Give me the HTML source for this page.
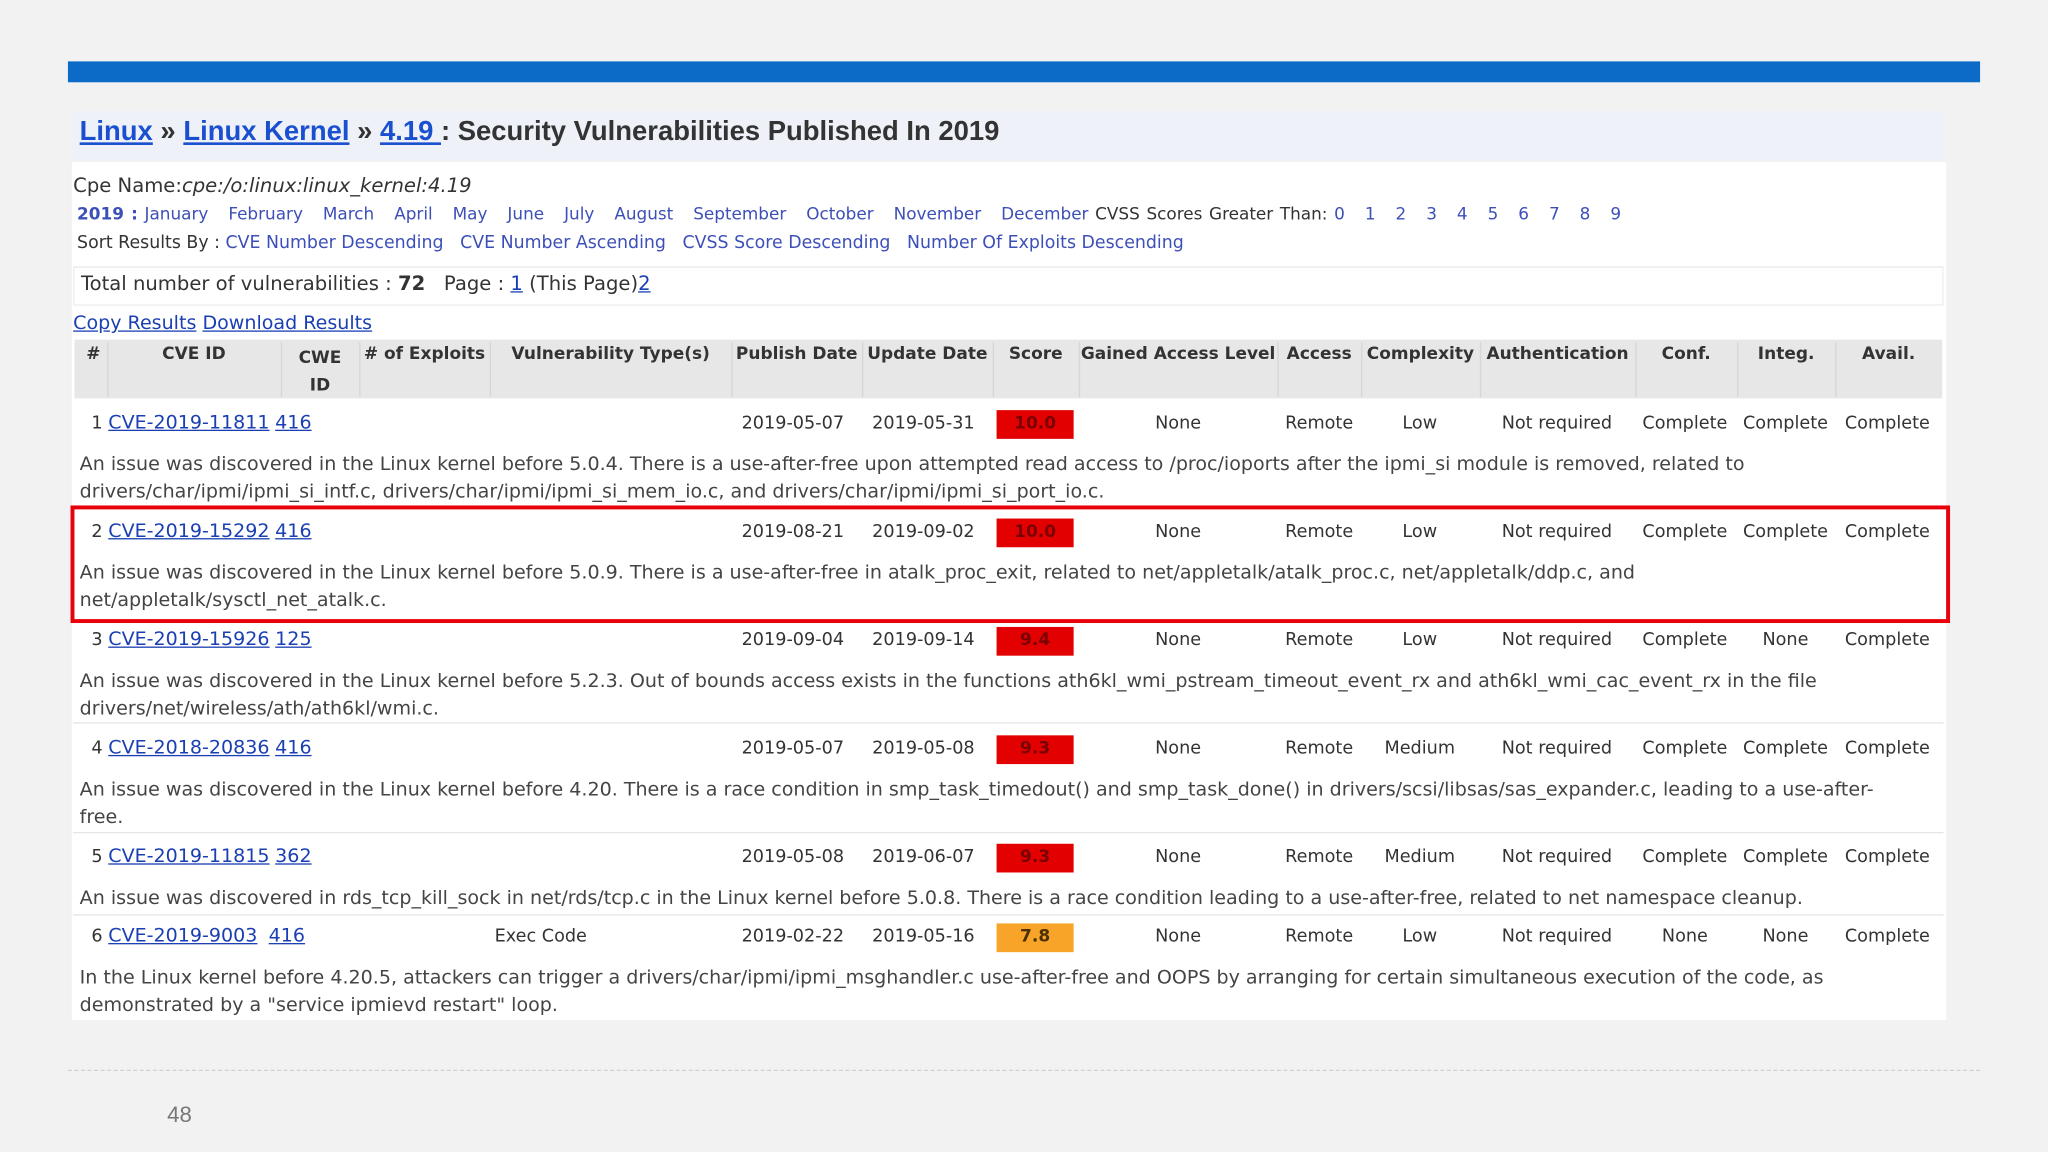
<!DOCTYPE html>
<html><head><meta charset="utf-8"><style>
html,body{margin:0;padding:0;width:2048px;height:1152px;overflow:hidden;background:#f2f2f2;}
#s{position:absolute;left:0;top:0;width:1568px;height:882px;transform:scale(1.306122);transform-origin:0 0;font-family:"DejaVu Sans","Liberation Sans",sans-serif;color:#333;}
.a{position:absolute;white-space:nowrap;line-height:16px;}
.c{text-align:center;}
a,.l{color:#1a3fb3;text-decoration:underline;}
.m{color:#3d4fb8;}
.t{font-size:13.5px;}
.d{font-size:14.6px;color:#444;}
.h{font-size:13px;font-weight:bold;color:#333;}
.cv{font-size:14.6px;}
.sc{position:absolute;left:763px;width:59px;height:22px;background:#e30000;color:#7a0000;font-weight:bold;font-size:13px;text-align:center;line-height:22px;}
.vl{position:absolute;top:262px;width:1px;height:42px;background:#d6d6d6;}
.hl{position:absolute;left:56px;width:1432px;height:1px;background:#e6e6e6;}
</style></head><body><div id="s">
<div style="position:absolute;left:52px;top:47px;width:1464px;height:16px;background:#0b6bc6"></div>
<div style="position:absolute;left:55px;top:85px;width:1435px;height:38px;background:#eef1f7"></div>
<div style="position:absolute;left:55px;top:124px;width:1435px;height:657px;background:#fff"></div>
<div class="a" style="left:61px;top:89px;line-height:24px;font-size:21px;font-weight:bold;color:#333;font-family:'Liberation Sans',sans-serif"><span class="l" style="color:#1a4fd0">Linux</span> » <span class="l" style="color:#1a4fd0">Linux Kernel</span> » <span class="l" style="color:#1a4fd0">4.19 </span>: Security Vulnerabilities Published In 2019</div>
<div class="a t" style="left:56px;top:134px;font-size:15px">Cpe Name:<i>cpe:/o:linux:linux_kernel:4.19</i></div>
<div class="a" style="left:59px;top:157px;font-size:12.9px;word-spacing:1px"><b class="m">2019 :</b> <span class="m">January &nbsp; February &nbsp; March &nbsp; April &nbsp; May &nbsp; June &nbsp; July &nbsp; August &nbsp; September &nbsp; October &nbsp; November &nbsp; December</span> CVSS Scores Greater Than: <span class="m">0 &nbsp; 1 &nbsp; 2 &nbsp; 3 &nbsp; 4 &nbsp; 5 &nbsp; 6 &nbsp; 7 &nbsp; 8 &nbsp; 9</span></div>
<div class="a" style="left:59px;top:179px;font-size:13.3px">Sort Results By : <span class="m">CVE Number Descending &nbsp; CVE Number Ascending &nbsp; CVSS Score Descending &nbsp; Number Of Exploits Descending</span></div>
<div style="position:absolute;left:56px;top:204px;width:1430px;height:28px;border:1px solid #eee;border-top:1px solid #e8e8e8"></div>
<div class="a t" style="left:62px;top:209px;font-size:15px">Total number of vulnerabilities : <b>72</b> &nbsp; Page : <span class="l">1</span> (This Page)<span class="l">2</span></div>
<div class="a t" style="left:56px;top:240px;font-size:14.6px"><span class="l">Copy Results</span> <span class="l">Download Results</span></div>
<div style="position:absolute;left:57px;top:260px;width:1430px;height:45px;background:#e7e7e7"></div>
<div class="vl" style="left:82px"></div><div class="vl" style="left:215px"></div><div class="vl" style="left:275px"></div><div class="vl" style="left:375px"></div><div class="vl" style="left:560px"></div><div class="vl" style="left:660px"></div><div class="vl" style="left:760px"></div><div class="vl" style="left:826px"></div><div class="vl" style="left:978px"></div><div class="vl" style="left:1042px"></div><div class="vl" style="left:1133px"></div><div class="vl" style="left:1252px"></div><div class="vl" style="left:1330px"></div><div class="vl" style="left:1405px"></div>
<div class="a h" style="left:66px;top:264px">#</div>
<div class="a h c" style="left:82px;width:133px;top:264px">CVE ID</div>
<div class="a h c" style="left:215px;width:60px;top:264px;line-height:21px;white-space:normal">CWE<br>ID</div>
<div class="a h c" style="left:275px;width:100px;top:264px">#&nbsp;of Exploits</div>
<div class="a h c" style="left:375px;width:185px;top:264px">Vulnerability Type(s)</div>
<div class="a h c" style="left:560px;width:100px;top:264px">Publish Date</div>
<div class="a h c" style="left:660px;width:100px;top:264px">Update Date</div>
<div class="a h c" style="left:760px;width:66px;top:264px">Score</div>
<div class="a h c" style="left:826px;width:152px;top:264px">Gained Access Level</div>
<div class="a h c" style="left:978px;width:64px;top:264px">Access</div>
<div class="a h c" style="left:1042px;width:91px;top:264px">Complexity</div>
<div class="a h c" style="left:1133px;width:119px;top:264px">Authentication</div>
<div class="a h c" style="left:1252px;width:78px;top:264px">Conf.</div>
<div class="a h c" style="left:1330px;width:75px;top:264px">Integ.</div>
<div class="a h c" style="left:1405px;width:82px;top:264px">Avail.</div>

<div class="hl" style="top:553px"></div><div class="hl" style="top:637px"></div><div class="hl" style="top:700px"></div>

<!-- row 1 -->
<div class="a t" style="left:70px;top:316px">1 <span class="l cv">CVE-2019-11811</span> <span class="l cv">416</span></div>
<div class="a t c" style="left:557px;width:100px;top:316px">2019-05-07</div>
<div class="a t c" style="left:657px;width:100px;top:316px">2019-05-31</div>
<div class="sc" style="top:314px">10.0</div>
<div class="a t c" style="left:852px;width:100px;top:316px">None</div>
<div class="a t c" style="left:960px;width:100px;top:316px">Remote</div>
<div class="a t c" style="left:1037px;width:100px;top:316px">Low</div>
<div class="a t c" style="left:1142px;width:100px;top:316px">Not required</div>
<div class="a t c" style="left:1240px;width:100px;top:316px">Complete</div>
<div class="a t c" style="left:1317px;width:100px;top:316px">Complete</div>
<div class="a t c" style="left:1395px;width:100px;top:316px">Complete</div>
<div class="a d" style="left:61px;top:345px;line-height:21px">An issue was discovered in the Linux kernel before 5.0.4. There is a use-after-free upon attempted read access to /proc/ioports after the ipmi_si module is removed, related to<br>drivers/char/ipmi/ipmi_si_intf.c, drivers/char/ipmi/ipmi_si_mem_io.c, and drivers/char/ipmi/ipmi_si_port_io.c.</div>

<!-- row 2 -->
<div class="a t" style="left:70px;top:399px">2 <span class="l cv">CVE-2019-15292</span> <span class="l cv">416</span></div>
<div class="a t c" style="left:557px;width:100px;top:399px">2019-08-21</div>
<div class="a t c" style="left:657px;width:100px;top:399px">2019-09-02</div>
<div class="sc" style="top:397px">10.0</div>
<div class="a t c" style="left:852px;width:100px;top:399px">None</div>
<div class="a t c" style="left:960px;width:100px;top:399px">Remote</div>
<div class="a t c" style="left:1037px;width:100px;top:399px">Low</div>
<div class="a t c" style="left:1142px;width:100px;top:399px">Not required</div>
<div class="a t c" style="left:1240px;width:100px;top:399px">Complete</div>
<div class="a t c" style="left:1317px;width:100px;top:399px">Complete</div>
<div class="a t c" style="left:1395px;width:100px;top:399px">Complete</div>
<div class="a d" style="left:61px;top:428px;line-height:21px">An issue was discovered in the Linux kernel before 5.0.9. There is a use-after-free in atalk_proc_exit, related to net/appletalk/atalk_proc.c, net/appletalk/ddp.c, and<br>net/appletalk/sysctl_net_atalk.c.</div>
<div style="position:absolute;left:54px;top:387px;width:1433px;height:84px;border:3px solid #e8000a"></div>

<!-- row 3 -->
<div class="a t" style="left:70px;top:482px">3 <span class="l cv">CVE-2019-15926</span> <span class="l cv">125</span></div>
<div class="a t c" style="left:557px;width:100px;top:482px">2019-09-04</div>
<div class="a t c" style="left:657px;width:100px;top:482px">2019-09-14</div>
<div class="sc" style="top:480px">9.4</div>
<div class="a t c" style="left:852px;width:100px;top:482px">None</div>
<div class="a t c" style="left:960px;width:100px;top:482px">Remote</div>
<div class="a t c" style="left:1037px;width:100px;top:482px">Low</div>
<div class="a t c" style="left:1142px;width:100px;top:482px">Not required</div>
<div class="a t c" style="left:1240px;width:100px;top:482px">Complete</div>
<div class="a t c" style="left:1317px;width:100px;top:482px">None</div>
<div class="a t c" style="left:1395px;width:100px;top:482px">Complete</div>
<div class="a d" style="left:61px;top:511px;line-height:21px">An issue was discovered in the Linux kernel before 5.2.3. Out of bounds access exists in the functions ath6kl_wmi_pstream_timeout_event_rx and ath6kl_wmi_cac_event_rx in the file<br>drivers/net/wireless/ath/ath6kl/wmi.c.</div>

<!-- row 4 -->
<div class="a t" style="left:70px;top:565px">4 <span class="l cv">CVE-2018-20836</span> <span class="l cv">416</span></div>
<div class="a t c" style="left:557px;width:100px;top:565px">2019-05-07</div>
<div class="a t c" style="left:657px;width:100px;top:565px">2019-05-08</div>
<div class="sc" style="top:563px">9.3</div>
<div class="a t c" style="left:852px;width:100px;top:565px">None</div>
<div class="a t c" style="left:960px;width:100px;top:565px">Remote</div>
<div class="a t c" style="left:1037px;width:100px;top:565px">Medium</div>
<div class="a t c" style="left:1142px;width:100px;top:565px">Not required</div>
<div class="a t c" style="left:1240px;width:100px;top:565px">Complete</div>
<div class="a t c" style="left:1317px;width:100px;top:565px">Complete</div>
<div class="a t c" style="left:1395px;width:100px;top:565px">Complete</div>
<div class="a d" style="left:61px;top:594px;line-height:21px">An issue was discovered in the Linux kernel before 4.20. There is a race condition in smp_task_timedout() and smp_task_done() in drivers/scsi/libsas/sas_expander.c, leading to a use-after-<br>free.</div>

<!-- row 5 -->
<div class="a t" style="left:70px;top:648px">5 <span class="l cv">CVE-2019-11815</span> <span class="l cv">362</span></div>
<div class="a t c" style="left:557px;width:100px;top:648px">2019-05-08</div>
<div class="a t c" style="left:657px;width:100px;top:648px">2019-06-07</div>
<div class="sc" style="top:646px">9.3</div>
<div class="a t c" style="left:852px;width:100px;top:648px">None</div>
<div class="a t c" style="left:960px;width:100px;top:648px">Remote</div>
<div class="a t c" style="left:1037px;width:100px;top:648px">Medium</div>
<div class="a t c" style="left:1142px;width:100px;top:648px">Not required</div>
<div class="a t c" style="left:1240px;width:100px;top:648px">Complete</div>
<div class="a t c" style="left:1317px;width:100px;top:648px">Complete</div>
<div class="a t c" style="left:1395px;width:100px;top:648px">Complete</div>
<div class="a d" style="left:61px;top:677px;line-height:21px">An issue was discovered in rds_tcp_kill_sock in net/rds/tcp.c in the Linux kernel before 5.0.8. There is a race condition leading to a use-after-free, related to net namespace cleanup.</div>

<!-- row 6 -->
<div class="a t" style="left:70px;top:709px">6 <span class="l cv">CVE-2019-9003</span> &nbsp;<span class="l cv">416</span></div>
<div class="a t c" style="left:364px;width:100px;top:709px">Exec Code</div>
<div class="a t c" style="left:557px;width:100px;top:709px">2019-02-22</div>
<div class="a t c" style="left:657px;width:100px;top:709px">2019-05-16</div>
<div class="sc" style="top:707px;background:#f7a428;color:#4a3000">7.8</div>
<div class="a t c" style="left:852px;width:100px;top:709px">None</div>
<div class="a t c" style="left:960px;width:100px;top:709px">Remote</div>
<div class="a t c" style="left:1037px;width:100px;top:709px">Low</div>
<div class="a t c" style="left:1142px;width:100px;top:709px">Not required</div>
<div class="a t c" style="left:1240px;width:100px;top:709px">None</div>
<div class="a t c" style="left:1317px;width:100px;top:709px">None</div>
<div class="a t c" style="left:1395px;width:100px;top:709px">Complete</div>
<div class="a d" style="left:61px;top:738px;line-height:21px">In the Linux kernel before 4.20.5, attackers can trigger a drivers/char/ipmi/ipmi_msghandler.c use-after-free and OOPS by arranging for certain simultaneous execution of the code, as<br>demonstrated by a "service ipmievd restart" loop.</div>

<div style="position:absolute;left:52px;top:819px;width:1464px;border-top:1px dashed #cfcfcf"></div>
<div class="a" style="left:128px;top:844px;font-size:17px;line-height:20px;color:#777;font-family:'Liberation Sans',sans-serif">48</div>
</div></body></html>
